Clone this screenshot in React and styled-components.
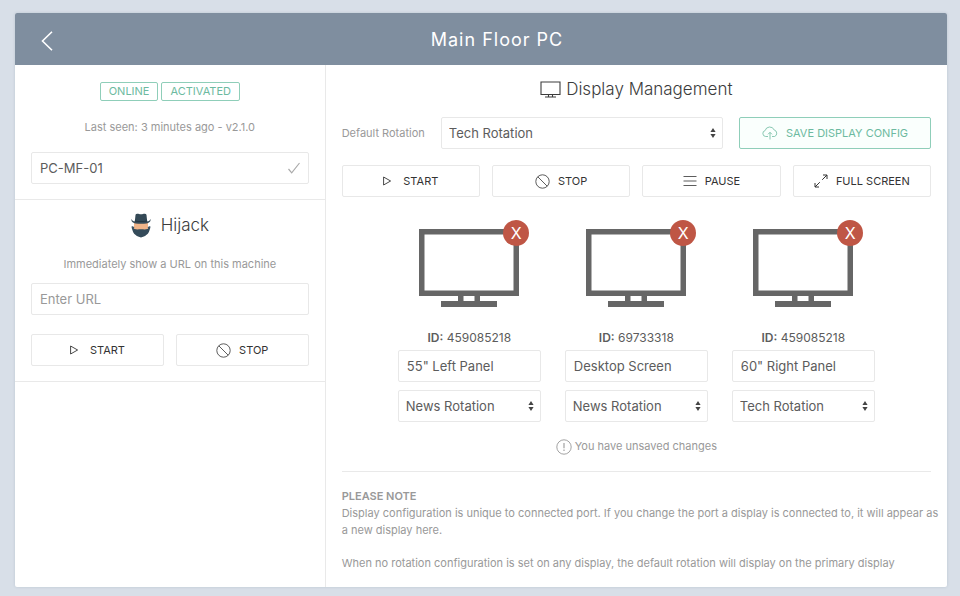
import React from "react";
import styled, { createGlobalStyle, css } from "styled-components";

const GlobalStyle = createGlobalStyle`
  *, *::before, *::after { box-sizing: border-box; }
  html, body { margin: 0; }
  body {
    background: #d8dfe8;
    color: #5c5c5c;
    font-family: Inter, "Liberation Sans", sans-serif;
    font-size: 11px;
    line-height: 17px;
  }
  button, input, select { font: inherit; color: inherit; margin: 0; }
  h1, h2, p { margin: 0; font-weight: 400; }
`;

const Page = styled.div`
  min-height: 100vh;
  padding: 13px 13px 10px 15px;
  display: flex;
`;

const Card = styled.div`
  flex: 1;
  min-width: 0;
  display: flex;
  flex-direction: column;
  background: #fff;
  border-radius: 2px;
  overflow: hidden;
  box-shadow: 0 0 3px rgba(80, 100, 125, 0.2);
`;

const Header = styled.header`
  display: grid;
  grid-template-columns: 64px 1fr 32px;
  align-items: center;
  height: 52px;
  background: #7f8e9f;
  color: #fff;
`;

const BackButton = styled.button`
  display: flex;
  justify-content: center;
  padding: 4px 0 0;
  border: 0;
  background: none;
`;

const Title = styled.h1`
  padding-top: 2px;
  text-align: center;
  font-size: 18px;
  line-height: 24px;
  letter-spacing: 1px;
`;

const Columns = styled.div`
  flex: 1;
  display: grid;
  grid-template-columns: 1fr 2fr;
`;

const Sidebar = styled.aside`
  border-right: 1px solid #e9e9e9;
`;

const SideSection = styled.section`
  display: flex;
  flex-direction: column;
  padding: ${(p) => (p.$compact ? "11px 16px 15px" : "17px 16px 15px")};
  border-bottom: 1px solid #e9e9e9;
`;

const Tags = styled.div`
  display: flex;
  justify-content: center;
  gap: 3px;
  margin-bottom: 18px;
`;

const Tag = styled.span`
  padding: 0 8px;
  border: 1px solid #8fceb9;
  border-radius: 2px;
  color: #6dbaa0;
  line-height: 17px;
`;

const Muted = styled.p`
  color: #999;
  text-align: center;
  margin-bottom: 16px;
`;

const FieldLabel = styled.label`
  margin: 17px 0 10px;
  color: #999;
  text-align: center;
`;

const Heading = styled.h2`
  display: flex;
  align-items: center;
  justify-content: center;
  gap: ${(p) => p.$gap}px;
  color: #3c3c3c;
  font-size: 17px;
  font-weight: 300;
  line-height: 28px;
`;

const fieldStyle = css`
  display: block;
  width: 100%;
  height: 32px;
  padding: 0 8px;
  border: 1px solid #e8e8e8;
  border-radius: 2px;
  background: #fff;
  font-size: 13px;
`;

const TextField = styled.input`
  ${fieldStyle}
  &::placeholder { color: #999; opacity: 1; }
`;

const FieldWrap = styled.div`
  position: relative;
  min-width: 0;
`;

const Adornment = styled.span`
  position: absolute;
  top: 0;
  bottom: 0;
  right: ${(p) => p.$right}px;
  display: flex;
  align-items: center;
  pointer-events: none;
`;

const NativeSelect = styled.select`
  ${fieldStyle}
  appearance: none;
  padding: 0 20px 0 7px;
`;

const ButtonRow = styled.div`
  display: grid;
  grid-auto-flow: column;
  grid-auto-columns: 1fr;
  gap: 12px;
  margin-top: ${(p) => p.$top}px;
`;

const Button = styled.button`
  display: flex;
  align-items: center;
  justify-content: center;
  gap: ${(p) => p.$gap || 8}px;
  height: 32px;
  padding: 0 8px;
  border: 1px solid ${(p) => (p.$accent ? "#8fceb9" : "#e8e8e8")};
  border-radius: 2px;
  background: ${(p) => (p.$accent ? "#fafffd" : "#fff")};
  color: ${(p) => (p.$accent ? "#6dbaa0" : "#333")};
  white-space: nowrap;
`;

const Main = styled.main`
  min-width: 0;
  padding: 10px 16px 15px;
`;

const RotationRow = styled.div`
  display: grid;
  grid-template-columns: auto 1fr 192px;
  gap: 16px;
  align-items: center;
  margin-top: 14px;
  & > label { color: #999; }
`;

const Displays = styled.div`
  display: flex;
  justify-content: center;
  gap: 24px;
  margin-top: 23px;
`;

const DisplayItem = styled.div`
  width: 143px;
  display: flex;
  flex-direction: column;
  gap: 8px;
`;

const Screen = styled.div`
  position: relative;
  align-self: center;
  height: 101px;
  padding-top: 9px;
`;

const RemoveButton = styled.button`
  position: absolute;
  top: 0;
  right: -10px;
  width: 26px;
  height: 26px;
  padding: 0;
  border: 0;
  border-radius: 50%;
  background: #bf5645;
  color: #fff;
  font-size: 16px;
  line-height: 26px;
`;

const DisplayId = styled.p`
  text-align: center;
  font-size: 12px;
  margin-bottom: -4px;
  & > b { font-weight: 600; }
`;

const Warning = styled.p`
  display: flex;
  align-items: center;
  justify-content: center;
  gap: 3px;
  margin-top: 16px;
  color: #999;
`;

const Divider = styled.hr`
  margin: 16px 0;
  border: 0;
  border-top: 1px solid #e9e9e9;
`;

const Note = styled.div`
  margin-right: -12px;
  color: #999;
  & > p + p { margin-top: 16px; }
  & b { display: block; font-weight: 600; }
`;

const stroke = { fill: "none", stroke: "currentColor", "aria-hidden": true };

const BackIcon = () => (
  <svg width="12" height="20" viewBox="0 0 12 20" {...stroke} strokeWidth="1.6">
    <path d="M11 .7 1.5 10 11 19.3" />
  </svg>
);
const CheckIcon = () => (
  <svg width="12" height="12" viewBox="0 0 12 12" {...stroke} stroke="#aaa" strokeWidth="1.2">
    <path d="m.5 7 3.2 3.8L11.5 1" />
  </svg>
);
const PlayIcon = () => (
  <svg width="8" height="10" viewBox="0 0 8 10" {...stroke} strokeWidth=".9">
    <path d="M.6 1v8l7-4z" />
  </svg>
);
const StopIcon = () => (
  <svg width="15" height="15" viewBox="0 0 15 15" {...stroke} strokeWidth=".8">
    <circle cx="7.5" cy="7.5" r="6.7" />
    <path d="m2.8 2.8 9.4 9.4" />
  </svg>
);
const PauseIcon = () => (
  <svg width="14" height="12" viewBox="0 0 14 12" {...stroke} strokeWidth=".8">
    <path d="M.5 1.500h13M.5 6h13M.5 10.500h13" />
  </svg>
);
const ExpandIcon = () => (
  <svg width="14" height="14" viewBox="0 0 14 14" {...stroke}>
    <path d="M9 1h4v4M13 1 8.200 5.800M5 13H1V9M1 13l4.800-4.800" />
  </svg>
);
const CloudIcon = () => (
  <svg width="16" height="14" viewBox="0 0 16 14" {...stroke} strokeWidth=".8">
    <path d="M6 10.500H3.700a3 3 0 0 1-.6-5.900A4.800 4.800 0 0 1 12.200 4a3.400 3.400 0 0 1 .3 6.500H10M8 13.500v-7M6 8.300l2-2 2 2" />
  </svg>
);
const MonitorIcon = () => (
  <svg width="21" height="17" viewBox="0 0 21 17" {...stroke} strokeWidth="1.1">
    <path d="M1 1h19v12.500H1zM8.500 13.500v2.200M12.500 13.500v2.200M5 16h11" />
  </svg>
);
const AlertIcon = () => (
  <svg width="16" height="16" viewBox="0 0 16 16" {...stroke} strokeWidth=".9">
    <circle cx="8" cy="8" r="7.2" />
    <path d="M8 4v5.200M8 10.600v1.300" strokeWidth="1.1" />
  </svg>
);
const SortIcon = () => (
  <svg width="6" height="10" viewBox="0 0 6 10" fill="#444" aria-hidden="true">
    <path d="M3 0 5.600 4H.4zM3 10 .4 6h5.200z" />
  </svg>
);
const ScreenIcon = () => (
  <svg width="100" height="79" viewBox="0 0 100 79" fill="#666" aria-hidden="true">
    <path
      fillRule="evenodd"
      d="M0 0h100v67H61v5h17v6H22v-6h17v-5H0zM5.500 5.500v56h89v-56zM44.500 67v5h11v-5z"
    />
  </svg>
);
const BanditIcon = () => (
  <svg width="20" height="25" viewBox="0 0 20 25" aria-hidden="true">
    <path d="M3 10h14v6l-2 5H5l-2-5z" fill="#efb489" />
    <path d="M.8 13c-.6 2 .2 3.600 1.700 4l.8-3zM19.200 13c.6 2-.2 3.600-1.700 4l-.8-3z" fill="#3e5463" />
    <path d="M1.300 14.500c2.600 2.600 5.200 1.800 8.700 1.800s6.100.8 8.700-1.800c.4 4.500-2.400 8.500-8.700 10-6.300-1.500-9.100-5.500-8.700-10z" fill="#344b5a" />
    <path d="M4.500 2C5 .6 7 .7 8 1q2 .5 4 0c1-.3 3-.4 3.500 1l.8 7.500H3.700z" fill="#344956" />
    <path d="M3.900 7.500q6.100 1.600 12.200 0l.2 2.500H3.700z" fill="#22313d" />
    <path d="M.6 6c.4 1.500 1.600 2.300 3.400 2.600q6 .9 12 0c1.800-.3 3-1.100 3.400-2.600.9 2.400-1.400 4.200-3.900 4.400q-5.500.8-11 0C2 10.200-.3 8.400.6 6z" fill="#344956" />
  </svg>
);

const Select = ({ id, label, value }) => (
  <FieldWrap>
    <NativeSelect id={id} aria-label={label} defaultValue={value}>
      <option>News Rotation</option>
      <option>Tech Rotation</option>
    </NativeSelect>
    <Adornment $right={7}>
      <SortIcon />
    </Adornment>
  </FieldWrap>
);

const displays = [
  { id: "459085218", name: '55" Left Panel', rotation: "News Rotation" },
  { id: "69733318", name: "Desktop Screen", rotation: "News Rotation" },
  { id: "459085218", name: '60" Right Panel', rotation: "Tech Rotation" },
];

export default function App() {
  return (
    <>
      <GlobalStyle />
      <Page>
        <Card>
          <Header>
            <BackButton aria-label="Back">
              <BackIcon />
            </BackButton>
            <Title>Main Floor PC</Title>
          </Header>
          <Columns>
            <Sidebar>
              <SideSection>
                <Tags>
                  <Tag>ONLINE</Tag>
                  <Tag>ACTIVATED</Tag>
                </Tags>
                <Muted>Last seen: 3 minutes ago - v2.1.0</Muted>
                <FieldWrap>
                  <TextField aria-label="Machine name" defaultValue="PC-MF-01" />
                  <Adornment $right={9}>
                    <CheckIcon />
                  </Adornment>
                </FieldWrap>
              </SideSection>
              <SideSection $compact>
                <Heading $gap={10}>
                  <BanditIcon />
                  Hijack
                </Heading>
                <FieldLabel htmlFor="hijack-url">
                  Immediately show a URL on this machine
                </FieldLabel>
                <TextField id="hijack-url" type="url" placeholder="Enter URL" />
                <ButtonRow $top={19}>
                  <Button $gap={12}>
                    <PlayIcon />
                    START
                  </Button>
                  <Button>
                    <StopIcon />
                    STOP
                  </Button>
                </ButtonRow>
              </SideSection>
            </Sidebar>
            <Main>
              <Heading $gap={5}>
                <MonitorIcon />
                Display Management
              </Heading>
              <RotationRow>
                <label htmlFor="default-rotation">Default Rotation</label>
                <Select id="default-rotation" value="Tech Rotation" />
                <Button $accent>
                  <CloudIcon />
                  SAVE DISPLAY CONFIG
                </Button>
              </RotationRow>
              <ButtonRow $top={16}>
                <Button $gap={12}>
                  <PlayIcon />
                  START
                </Button>
                <Button>
                  <StopIcon />
                  STOP
                </Button>
                <Button>
                  <PauseIcon />
                  PAUSE
                </Button>
                <Button>
                  <ExpandIcon />
                  FULL SCREEN
                </Button>
              </ButtonRow>
              <Displays>
                {displays.map((d) => (
                  <DisplayItem key={d.name}>
                    <Screen>
                      <ScreenIcon />
                      <RemoveButton aria-label={`Remove ${d.name}`}>X</RemoveButton>
                    </Screen>
                    <DisplayId>
                      <b>ID:</b> {d.id}
                    </DisplayId>
                    <TextField aria-label="Display name" defaultValue={d.name} />
                    <Select label={`Rotation for ${d.name}`} value={d.rotation} />
                  </DisplayItem>
                ))}
              </Displays>
              <Warning>
                <AlertIcon />
                You have unsaved changes
              </Warning>
              <Divider />
              <Note>
                <p>
                  <b>PLEASE NOTE</b>
                  Display configuration is unique to connected port. If you change the port a
                  display is connected to, it will appear as a new display here.
                </p>
                <p>
                  When no rotation configuration is set on any display, the default rotation will
                  display on the primary display
                </p>
              </Note>
            </Main>
          </Columns>
        </Card>
      </Page>
    </>
  );
}
